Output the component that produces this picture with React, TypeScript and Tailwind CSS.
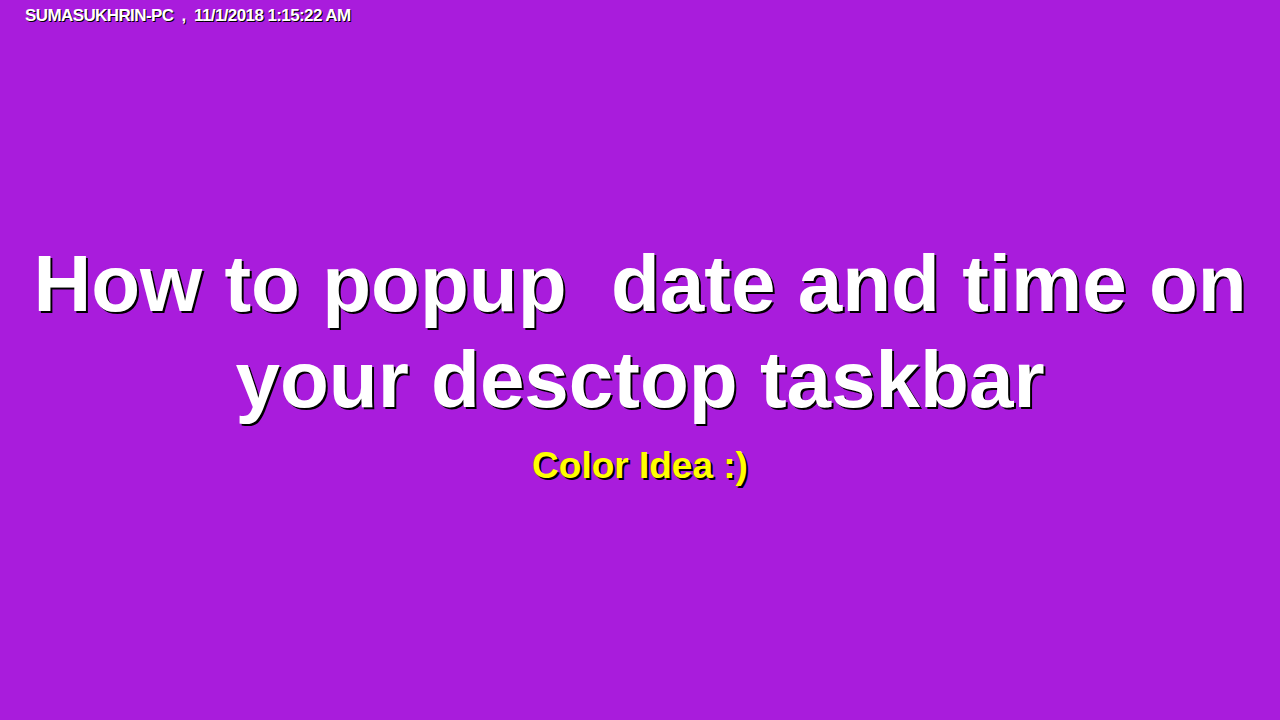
export default function App() {
  return (
    <div className="w-[1280px] h-[720px] bg-[#a91cdc] relative overflow-hidden" style={{ fontFamily: '"Liberation Sans", Arial, sans-serif' }}>
      <div className="pl-[25px] pt-[3px] text-[17px] font-bold text-white tracking-[-0.6px] whitespace-pre [text-shadow:1px_1px_0_#000]">
        SUMASUKHRIN-PC  ,  11/1/2018 1:15:22 AM
      </div>
      <div className="mt-[207px] flex flex-col items-center">
        <div className="text-[80px] leading-[96px] font-bold text-white text-center whitespace-pre [text-shadow:2px_2px_0_#000]">
          {"How to popup  date and time on\nyour desctop taskbar"}
        </div>
        <div className="mt-[10px] text-[37px] font-bold text-[#ffff00] [text-shadow:2px_2px_0_#000]">Color Idea :)</div>
      </div>
    </div>
  );
}
